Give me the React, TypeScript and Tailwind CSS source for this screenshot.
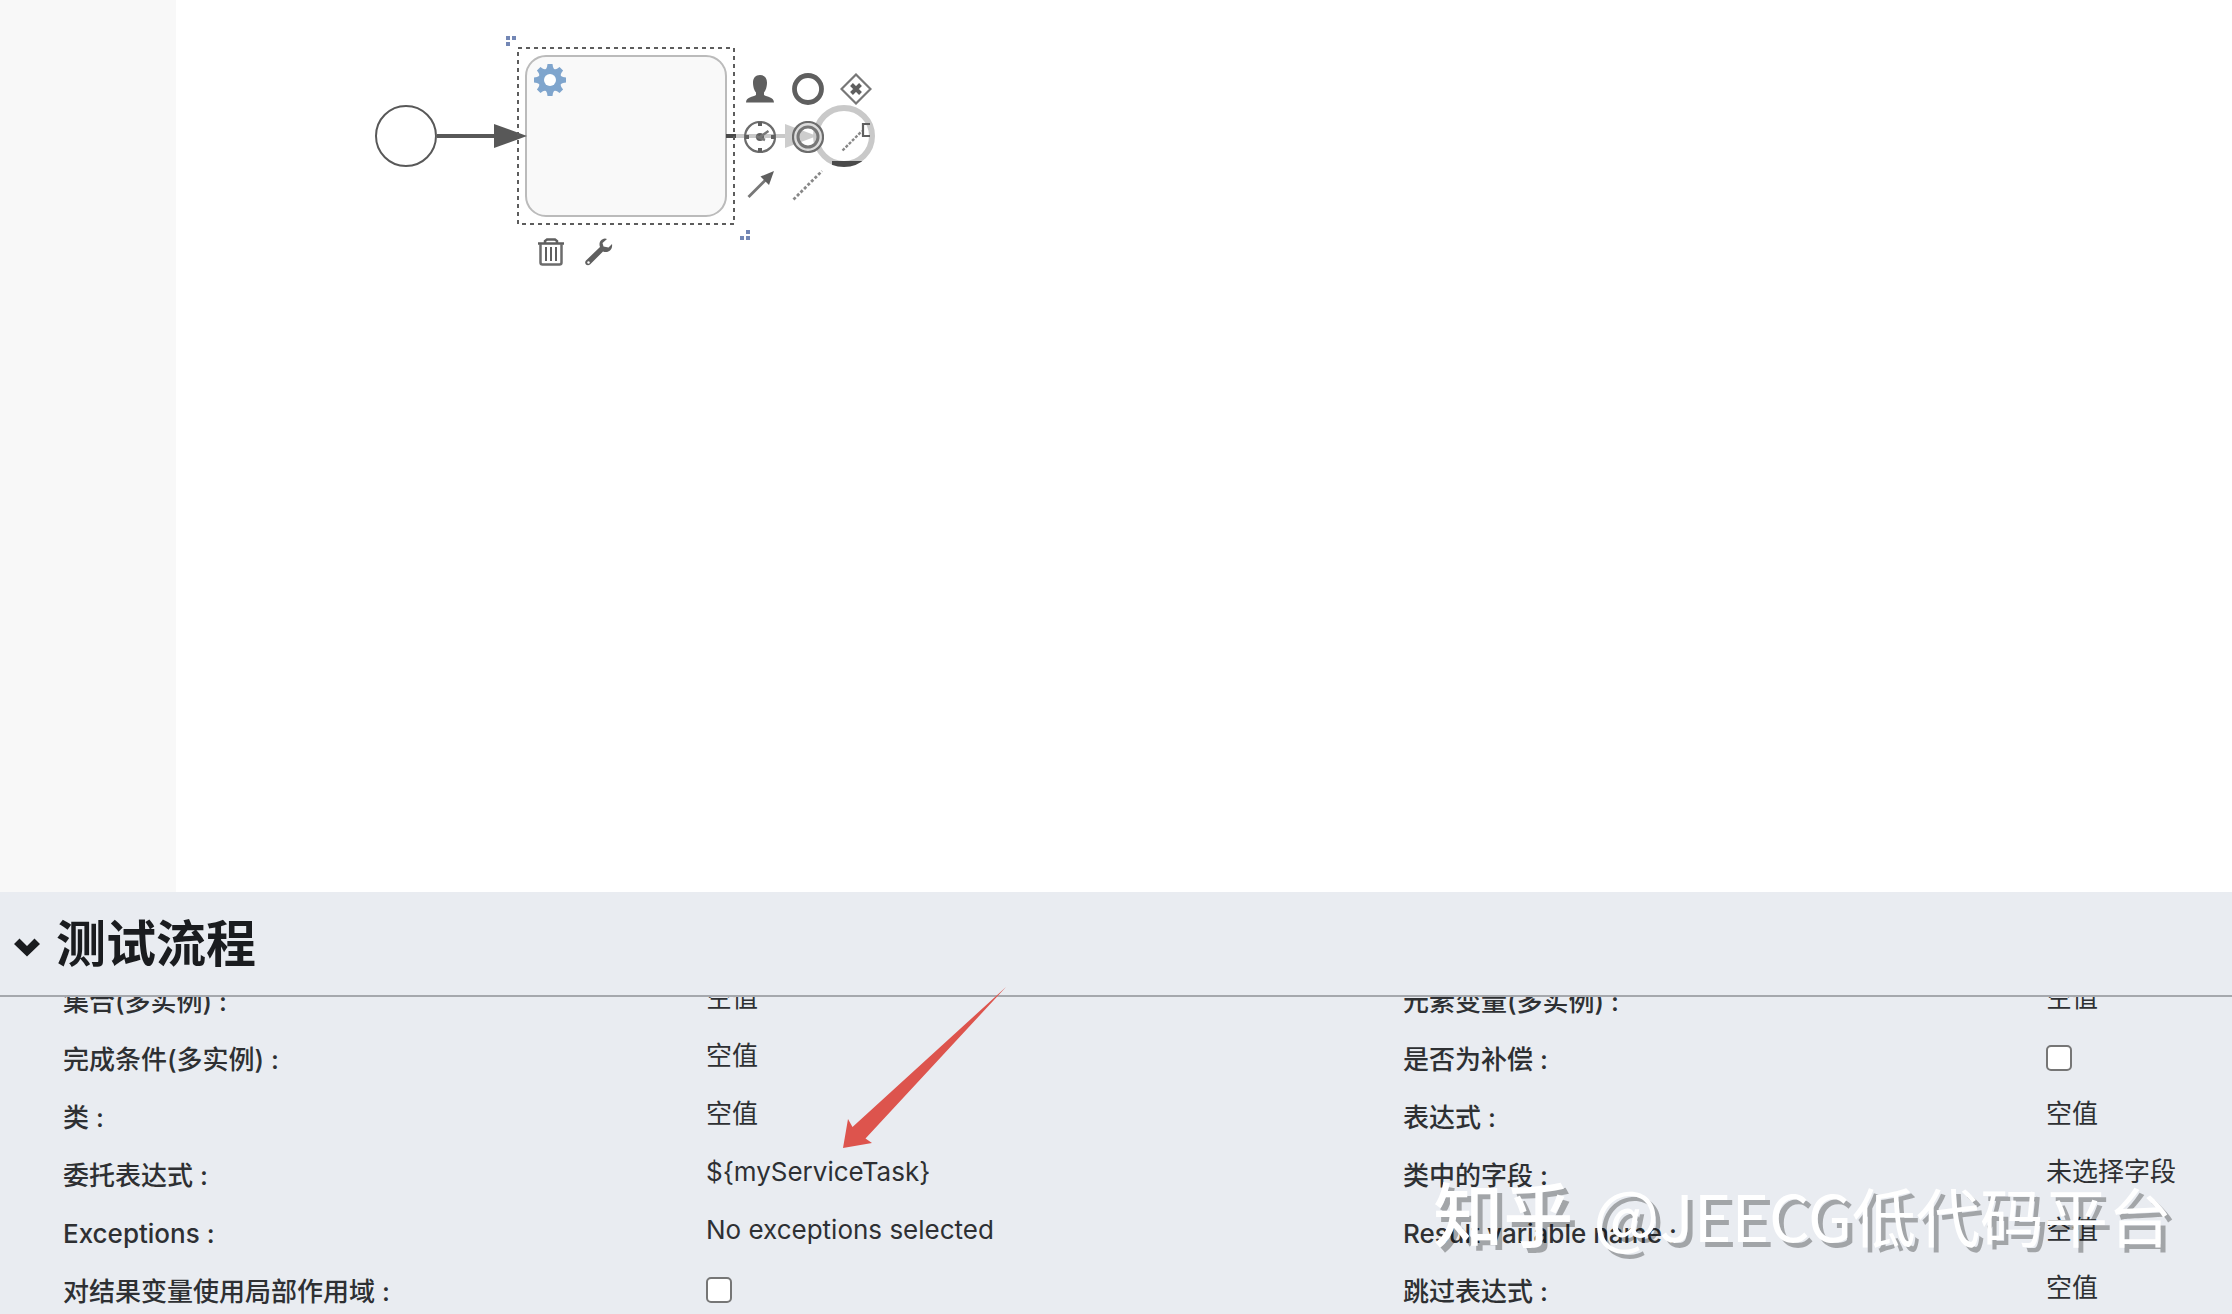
import type { ReactNode } from "react";

interface Property {
  id: string;
  label: string;
  value?: string;
}

const properties: Property[] = [
  { id: "collection", label: "集合(多实例)", value: "空值" },
  { id: "element-variable", label: "元素变量(多实例)", value: "空值" },
  { id: "completion", label: "完成条件(多实例)", value: "空值" },
  { id: "compensation", label: "是否为补偿" },
  { id: "class", label: "类", value: "空值" },
  { id: "expression", label: "表达式", value: "空值" },
  { id: "delegate", label: "委托表达式", value: "${myServiceTask}" },
  { id: "class-fields", label: "类中的字段", value: "未选择字段" },
  { id: "exceptions", label: "Exceptions", value: "No exceptions selected" },
  { id: "result-variable", label: "Result variable name", value: "空值" },
  { id: "local-scope", label: "对结果变量使用局部作用域" },
  { id: "skip-expression", label: "跳过表达式", value: "空值" },
];

function PadButton({ title, children }: { title: string; children: ReactNode }) {
  return (
    <button type="button" aria-label={title} className="flex size-12 items-center justify-center bg-white/70">
      <svg viewBox="0 0 32 32" className="size-8" fill="none" stroke="#5f5f5f">
        {children}
      </svg>
    </button>
  );
}

function Diagram() {
  return (
    <svg width="920" height="300" className="absolute top-0 left-0" fill="none">
      {/* start event */}
      <circle cx="406" cy="136" r="30" fill="#fff" stroke="#585858" strokeWidth="2" />
      {/* service task and incoming flow */}
      <rect x="526" y="56" width="200" height="160" rx="20" fill="#f9f9f9" stroke="#bbbbbb" strokeWidth="2" />
      <path d="M437 136H495" stroke="#585858" strokeWidth="4" />
      <path d="M494 124L527 136L494 148Z" fill="#585858" />
      <g transform="translate(550 80)">
        <g fill="#7fa5cd">
          <circle r="11.500" />
          {[0, 45, 90, 135, 180, 225, 270, 315].map((angle) => (
            <path key={angle} d="M-5 -9L-3 -13L-2.500 -16H2.500L3 -13L5 -9Z" transform={`rotate(${angle})`} />
          ))}
        </g>
        <circle r="6" fill="#fff" />
      </g>
      {/* end event and outgoing flow */}
      <path d="M726 136H786" stroke="#4a4a4a" strokeWidth="4" />
      <path d="M785 124L817 136L785 148Z" fill="#585858" />
      <circle cx="844" cy="136" r="28" fill="#fff" stroke="#4a4a4a" strokeWidth="6" />
      {/* selection frame */}
      <rect x="518" y="48" width="216" height="176" stroke="#5c5c5c" strokeWidth="2" strokeDasharray="4 4" />
      <g fill="#7387b5">
        <path d="M506 36h4v4h-4zM512 36h4v4h-4zM506 42h4v4h-4z" />
        <path d="M746 230h4v4h-4zM740 236h4v4h-4zM746 236h4v4h-4z" />
      </g>
    </svg>
  );
}

function ContextPad() {
  return (
    <>
      <div className="absolute top-[65px] left-[736px] grid grid-cols-3">
        <PadButton title="User task">
          <path
            d="M16 2C11.500 2 9 5 9 9.500C9 14 10.500 18 12 19.500V22C9 24 2 24 2 29.500H30C30 24 23 24 20 22V19.500C21.500 18 23 14 23 9.500C23 5 20.500 2 16 2Z"
            fill="#5f5f5f"
            stroke="none"
          />
        </PadButton>
        <PadButton title="End event">
          <circle cx="16" cy="16" r="13.500" strokeWidth="4.800" />
        </PadButton>
        <PadButton title="Exclusive gateway">
          <path d="M16 1.500L30.500 16L16 30.500L1.500 16Z" stroke="#777" strokeWidth="2.200" />
          <path d="M11.500 11.500L20.500 20.500M20.500 11.500L11.500 20.500" strokeWidth="4" />
        </PadButton>
        <PadButton title="Timer event">
          <circle cx="16" cy="16" r="15" stroke="#6c6c6c" strokeWidth="2.200" />
          <path d="M16 1V5M16 27V31M1 16H5M27 16H31" strokeWidth="4" />
          <circle cx="16" cy="16" r="4" fill="#5f5f5f" stroke="none" />
          <path d="M16 16L24.500 10M12 15L21 19" stroke="#777" strokeWidth="2.500" />
        </PadButton>
        <PadButton title="Intermediate event">
          <circle cx="16" cy="16" r="12.500" stroke="#dcdcdc" strokeWidth="3" />
          <circle cx="16" cy="16" r="15" stroke="#6c6c6c" strokeWidth="2.200" />
          <circle cx="16" cy="16" r="10" stroke="#777" strokeWidth="3" />
        </PadButton>
        <PadButton title="Text annotation">
          <path d="M2.500 29.500L22 10" stroke="#888" strokeWidth="2.400" strokeDasharray="3 1.500" />
          <path d="M30 3H23V15H30" strokeWidth="2.200" />
        </PadButton>
        <PadButton title="Sequence flow">
          <path d="M4.500 28L22 10.500" stroke="#777" strokeWidth="2.800" />
          <path d="M30 2L16.500 7.500L25 16Z" fill="#5f5f5f" stroke="none" />
        </PadButton>
        <PadButton title="Association">
          <path d="M1.500 30.500L30 2" stroke="#888" strokeWidth="2.800" strokeDasharray="3 2" />
        </PadButton>
      </div>
      <div className="absolute top-[228px] left-[527px] flex">
        <PadButton title="Delete">
          <path d="M3 7.500H29M10 7V5L12 3.500H20L22 5V7" strokeWidth="2.500" />
          <path d="M5.500 8V26.500Q5.500 28.500 7.500 28.500H24.500Q26.500 28.500 26.500 26.500V8" stroke="#6c6c6c" strokeWidth="2.500" />
          <path d="M11 11V25M16 11V25M21 11V25" strokeWidth="2" />
        </PadButton>
        <PadButton title="Change type">
          <path
            d="M22 2.500C17.500 3 15.500 7 17 11L3 24.500C.5 27 4 31 7 28.500L20 15.500C25 17.500 30 14 29 8L25.500 11.500L20.500 10.500L19.500 7L24 3Z"
            fill="#5f5f5f"
            stroke="none"
          />
          <circle cx="5.500" cy="26.500" r="1.200" fill="#fff" stroke="none" />
        </PadButton>
      </div>
    </>
  );
}

function PropertyCell({ item }: { item: Property }) {
  return (
    <>
      <label htmlFor={item.value ? undefined : item.id} className="h-[58px] font-medium leading-[60px] whitespace-nowrap">
        {item.label} :
      </label>
      {item.value ? (
        <span className="leading-[52px] whitespace-nowrap">{item.value}</span>
      ) : (
        <span className="flex h-14 items-center">
          <input
            id={item.id}
            type="checkbox"
            className="size-[26px] appearance-none rounded-[5px] border-2 border-[#767676] bg-white checked:bg-blue-600"
          />
        </span>
      )}
    </>
  );
}

export default function App() {
  return (
    <div className="flex h-screen flex-col overflow-hidden bg-white font-[Inter,'Noto_Sans_CJK_SC',sans-serif] text-[#2e3033]">
      <div className="flex flex-1">
        <aside className="w-44 bg-[#f8f8f8]" />
        <main className="flex-1">
          <Diagram />
          <ContextPad />
        </main>
      </div>

      <section className="relative h-[422px] shrink-0 bg-[#e9ecf1]">
        <header className="flex h-[105px] items-center border-b-2 border-[#a5a8ad] pl-3.5">
          <button type="button" aria-label="折叠" className="mr-4 pt-2">
            <svg viewBox="0 0 26 19" className="h-[19px] w-[26px]" fill="#1a1c1f">
              <path d="M0 6L5.500 .5L13 8L20.500 .5L26 6L13 18.500Z" />
            </svg>
          </button>
          <h1 className="text-[50px] leading-none font-bold text-[#1a1c1f]">测试流程</h1>
        </header>

        <div className="h-[317px] overflow-hidden">
          <div className="-mt-[25px] grid grid-cols-[643fr_697fr_643fr_186fr] pl-[63px] text-[26px]">
            {properties.map((item) => (
              <PropertyCell key={item.id} item={item} />
            ))}
          </div>
        </div>

        {/* pointer to the delegate expression */}
        <svg viewBox="0 0 163 161" className="absolute top-[95px] left-[843px] h-[161px] w-[163px]" fill="#dd544d">
          <path d="M0 161L5 132L9.500 140L163 0L22.500 151.500L29 156Z" />
        </svg>

        <div className="pointer-events-none absolute right-[60px] bottom-[60px] flex items-baseline font-['Noto_Sans_CJK_SC',sans-serif] text-[64px] leading-[80px] whitespace-nowrap text-white [text-shadow:5px_5px_0_rgba(0,0,0,0.3)]">
          <span className="mr-5 text-[70px] font-medium">知乎</span>
          <span className="text-[70px]">@</span>
          <span>JEECG低代码平台</span>
        </div>
      </section>
    </div>
  );
}
